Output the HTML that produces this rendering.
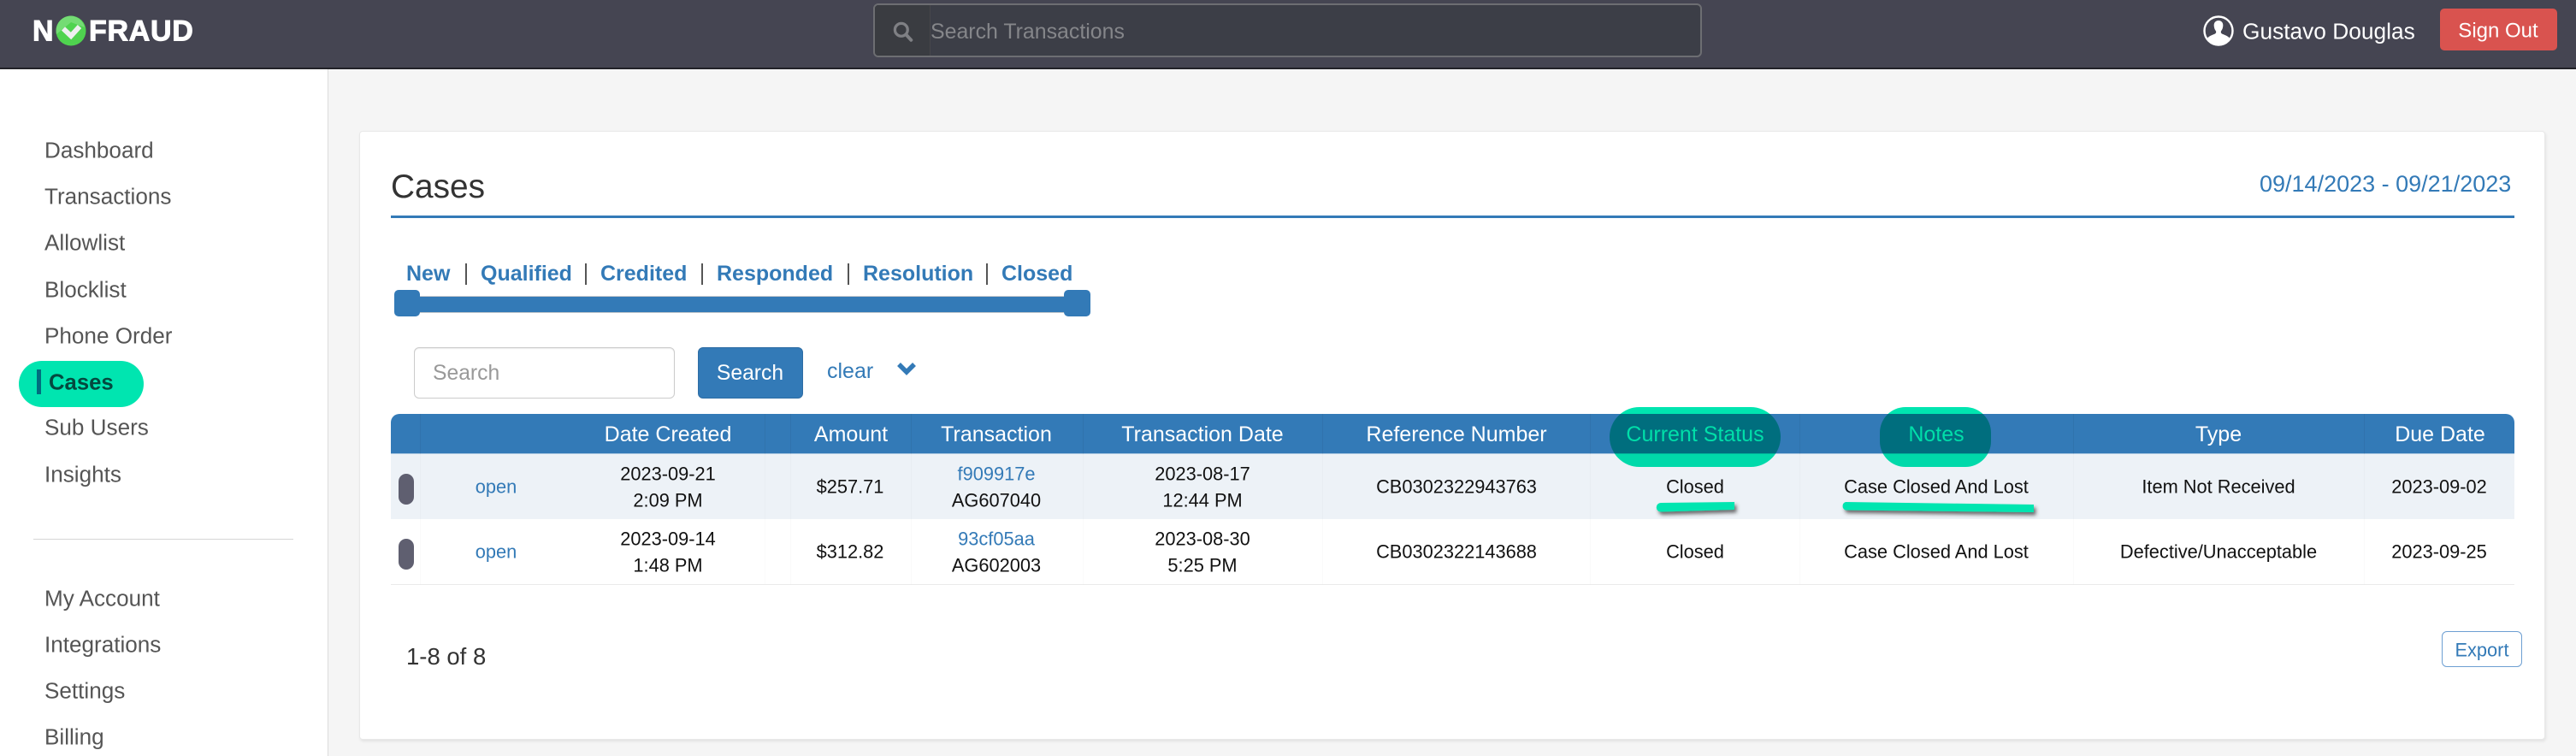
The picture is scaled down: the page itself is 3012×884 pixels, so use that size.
<!DOCTYPE html>
<html lang="en">
<head>
<meta charset="utf-8">
<title>NoFraud Cases</title>
<style>
html,body{margin:0;padding:0;width:3012px;height:884px;overflow:hidden;background:#f5f5f5;font-family:"Liberation Sans",sans-serif}
div,span,a,svg{position:absolute;box-sizing:border-box}
.c{transform:translate(-50%,calc(-50% + 1.5px));white-space:nowrap;line-height:1}
.l{transform:translateY(calc(-50% + 1.5px));white-space:nowrap;line-height:1}
.n{left:52px;font-size:26.1px;color:#555}
.th{top:507px;font-size:25px;color:#fff}
.td{font-size:21.8px;color:#111}
.lk{font-size:21.8px;color:#337ab7}
.f{top:319px;font-size:25px;font-weight:bold;color:#337ab7}
.sep{top:308px;width:2px;height:25px;background:#555}
.vh{top:484px;width:1px;height:47px;background:rgba(0,0,0,.05)}
.vb{top:531px;width:1px;height:152px;background:rgba(0,0,0,.018)}
.dot{left:466px;width:18px;height:36px;border-radius:9px;background:#5f5f70}
.pill{background:#00e5b0;mix-blend-mode:multiply}
</style>
</head>
<body>
<!-- header -->
<div style="left:0;top:0;width:3012px;height:81px;background:#454552;border-bottom:2px solid #222228"></div>
<span class="l" style="left:38px;top:35px;font-size:34px;font-weight:bold;color:#fff;-webkit-text-stroke:1px #fff">N</span>
<svg style="left:65px;top:18px" width="36" height="36" viewBox="0 0 36 36">
<circle cx="18" cy="18" r="17.5" fill="#4fd34f"/>
<path d="M18 .5A17.5 17.5 0 0 0 1 22L18 8l16 6A17.5 17.5 0 0 0 18 .5z" fill="#74dc74"/>
<path d="M9 15.5l9 8.5 10-11" fill="none" stroke="#eef0f0" stroke-width="6"/>
</svg>
<span class="l" style="left:104px;top:35px;font-size:34px;font-weight:bold;color:#fff;letter-spacing:.7px;-webkit-text-stroke:1px #fff">FRAUD</span>

<div style="left:1021px;top:4px;width:969px;height:63px;background:#3c3e47;border:2px solid #6d6e72;border-radius:6px;overflow:hidden">
<div style="left:0;top:0;width:65px;height:59px;background:#3a3c41;border-right:1px solid #46474b"></div>
</div>
<svg style="left:1044px;top:25px" width="24" height="24" viewBox="0 0 22 22"><circle cx="9" cy="9" r="6.800" fill="none" stroke="#7f8084" stroke-width="3"/><path d="M14 14l5.500 6" stroke="#7f8084" stroke-width="3.600" stroke-linecap="round"/></svg>
<span class="l" style="left:1088px;top:36px;font-size:24.9px;color:#85868a">Search Transactions</span>

<svg style="left:2576px;top:18px" width="36" height="36" viewBox="0 0 36 36">
<circle cx="18" cy="18" r="16.5" fill="#454552" stroke="#fff" stroke-width="2.4"/>
<path d="M18 6c3.6 0 5.6 2.8 5.3 6.3-.2 2.500-1 4.700-2.300 6.100-.5 1.700 0 2.700 1.900 3.500 3.200 1.300 6.400 2.500 8 4.700A16.500 16.500 0 0 1 18 34.500 16.500 16.500 0 0 1 5.100 26.600c1.600-2.200 4.800-3.400 8-4.700 1.900-.8 2.400-1.800 1.900-3.500-1.300-1.400-2.100-3.600-2.300-6.100C12.400 8.800 14.400 6 18 6z" fill="#fff"/>
</svg>
<span class="l" style="left:2622px;top:35px;font-size:26.3px;color:#fff">Gustavo Douglas</span>
<div style="left:2853px;top:10px;width:137px;height:49px;background:#d9534f;border-radius:5px"></div>
<span class="c" style="left:2921px;top:35px;font-size:24px;color:#fff">Sign Out</span>

<!-- sidebar -->
<div style="left:0;top:81px;width:384px;height:803px;background:#fff;border-right:1px solid #dcdcdc"></div>
<span class="l n" style="top:174px">Dashboard</span>
<span class="l n" style="top:228px">Transactions</span>
<span class="l n" style="top:282px">Allowlist</span>
<span class="l n" style="top:337px">Blocklist</span>
<span class="l n" style="top:391px">Phone Order</span>
<div style="left:22px;top:422px;width:146px;height:54px;border-radius:27px;background:#00e5b0"></div>
<div style="left:43px;top:432px;width:5px;height:29px;background:#006d7e"></div>
<span class="l" style="left:57px;top:447px;font-size:25.7px;font-weight:bold;color:#04493f">Cases</span>
<span class="l n" style="top:498px">Sub Users</span>
<span class="l n" style="top:553px">Insights</span>
<div style="left:39px;top:630px;width:304px;height:1px;background:#d5d5d5"></div>
<span class="l n" style="top:698px">My Account</span>
<span class="l n" style="top:752px">Integrations</span>
<span class="l n" style="top:806px">Settings</span>
<span class="l n" style="top:860px">Billing</span>

<!-- card -->
<div style="left:420px;top:153px;width:2556px;height:712px;background:#fff;border:1px solid #e8e8e8;border-radius:4px;box-shadow:1px 2px 3px rgba(0,0,0,.08)"></div>
<span class="l" style="left:457px;top:218px;font-size:38.8px;color:#333">Cases</span>
<span class="l" style="left:2642px;top:214px;font-size:27px;color:#337ab7">09/14/2023 - 09/21/2023</span>
<div style="left:457px;top:252px;width:2483px;height:3px;background:#337ab7"></div>

<!-- filter -->
<span class="l f" style="left:475px">New</span>
<div class="sep" style="left:544px"></div>
<span class="l f" style="left:562px">Qualified</span>
<div class="sep" style="left:684px"></div>
<span class="l f" style="left:702px">Credited</span>
<div class="sep" style="left:820px"></div>
<span class="l f" style="left:838px">Responded</span>
<div class="sep" style="left:991px"></div>
<span class="l f" style="left:1009px">Resolution</span>
<div class="sep" style="left:1153px"></div>
<span class="l f" style="left:1171px">Closed</span>
<div style="left:489px;top:346px;width:756px;height:20px;background:#337ab7;border-top:1px solid #c4c8cc;border-bottom:1px solid #c4c8cc"></div>
<div style="left:461px;top:339px;width:30px;height:31px;background:#337ab7;border-radius:5px"></div>
<div style="left:1244px;top:339px;width:31px;height:31px;background:#337ab7;border-radius:5px"></div>

<!-- search row -->
<div style="left:484px;top:406px;width:305px;height:60px;background:#fff;border:1px solid #ccc;border-radius:6px;box-shadow:inset 0 1px 1px rgba(0,0,0,.08)"></div>
<span class="l" style="left:506px;top:436px;font-size:24.7px;color:#999">Search</span>
<div style="left:816px;top:406px;width:123px;height:60px;background:#337ab7;border:1px solid #2e6da4;border-radius:6px"></div>
<span class="c" style="left:877px;top:436px;font-size:24.7px;color:#fff">Search</span>
<span class="l" style="left:967px;top:433px;font-size:25px;color:#337ab7">clear</span>
<svg style="left:1048px;top:423px" width="24" height="16" viewBox="0 0 24 16"><path d="M3 3l9 9 9-9" fill="none" stroke="#337ab7" stroke-width="5.500"/></svg>

<!-- table -->
<div style="left:457px;top:484px;width:2483px;height:47px;background:#337ab7;border-radius:10px 10px 0 0;border-bottom:1px solid #a9c6e0"></div>
<div style="left:457px;top:531px;width:2483px;height:76px;background:#edf2f7"></div>
<div style="left:457px;top:607px;width:2483px;height:77px;background:#fff;border-bottom:1px solid #eaeaea"></div>
<div class="vh" style="left:491px"></div><div class="vh" style="left:894px"></div><div class="vh" style="left:924px"></div><div class="vh" style="left:1065px"></div><div class="vh" style="left:1266px"></div><div class="vh" style="left:1546px"></div><div class="vh" style="left:1859px"></div><div class="vh" style="left:2104px"></div><div class="vh" style="left:2424px"></div><div class="vh" style="left:2764px"></div>
<div class="vb" style="left:491px"></div><div class="vb" style="left:894px"></div><div class="vb" style="left:924px"></div><div class="vb" style="left:1065px"></div><div class="vb" style="left:1266px"></div><div class="vb" style="left:1546px"></div><div class="vb" style="left:1859px"></div><div class="vb" style="left:2104px"></div><div class="vb" style="left:2424px"></div><div class="vb" style="left:2764px"></div>

<span class="c th" style="left:781px">Date Created</span>
<span class="c th" style="left:995px">Amount</span>
<span class="c th" style="left:1165px">Transaction</span>
<span class="c th" style="left:1406px">Transaction Date</span>
<span class="c th" style="left:1703px">Reference Number</span>
<span class="c th" style="left:2594px">Type</span>
<span class="c th" style="left:2853px">Due Date</span>

<div class="pill" style="left:1882px;top:476px;width:200px;height:70px;border-radius:35px"></div>
<div class="pill" style="left:2198px;top:476px;width:130px;height:70px;border-radius:30px"></div>
<span class="c th" style="left:1982px;color:#00dfa9">Current Status</span>
<span class="c th" style="left:2264px;color:#00dfa9">Notes</span>

<div class="dot" style="top:554px"></div>
<div class="dot" style="top:630px"></div>
<span class="c lk" style="left:580px;top:568px">open</span>
<span class="c lk" style="left:580px;top:644px">open</span>

<span class="c td" style="left:781px;top:553px">2023-09-21</span>
<span class="c td" style="left:781px;top:584px">2:09 PM</span>
<span class="c td" style="left:994px;top:568px">$257.71</span>
<span class="c lk" style="left:1165px;top:553px">f909917e</span>
<span class="c td" style="left:1165px;top:584px">AG607040</span>
<span class="c td" style="left:1406px;top:553px">2023-08-17</span>
<span class="c td" style="left:1406px;top:584px">12:44 PM</span>
<span class="c td" style="left:1703px;top:568px">CB0302322943763</span>
<span class="c td" style="left:1982px;top:568px">Closed</span>
<span class="c td" style="left:2264px;top:568px">Case Closed And Lost</span>
<span class="c td" style="left:2594px;top:568px">Item Not Received</span>
<span class="c td" style="left:2852px;top:568px">2023-09-02</span>

<span class="c td" style="left:781px;top:629px">2023-09-14</span>
<span class="c td" style="left:781px;top:660px">1:48 PM</span>
<span class="c td" style="left:994px;top:644px">$312.82</span>
<span class="c lk" style="left:1165px;top:629px">93cf05aa</span>
<span class="c td" style="left:1165px;top:660px">AG602003</span>
<span class="c td" style="left:1406px;top:629px">2023-08-30</span>
<span class="c td" style="left:1406px;top:660px">5:25 PM</span>
<span class="c td" style="left:1703px;top:644px">CB0302322143688</span>
<span class="c td" style="left:1982px;top:644px">Closed</span>
<span class="c td" style="left:2264px;top:644px">Case Closed And Lost</span>
<span class="c td" style="left:2594px;top:644px">Defective/Unacceptable</span>
<span class="c td" style="left:2852px;top:644px">2023-09-25</span>

<!-- highlighter strokes -->
<svg style="left:1930px;top:580px" width="460" height="30" viewBox="0 0 460 30">
<defs><filter id="s" x="-10%" y="-50%" width="120%" height="220%"><feDropShadow dx="2.500" dy="3.500" stdDeviation="2" flood-color="#333" flood-opacity=".7"/></filter></defs>
<path d="M12 8L98 7V16L12 18.500A5 5 0 0 1 12 8z" fill="#00e5b0" filter="url(#s)"/>
<path d="M228 7L448 10V19L228 16.500A5 5 0 0 1 228 7z" fill="#00e5b0" filter="url(#s)"/>
</svg>

<span class="l" style="left:475px;top:766px;font-size:27.500px;color:#333">1-8 of 8</span>
<div style="left:2855px;top:738px;width:94px;height:42px;background:#fff;border:1px solid #6d9fd2;border-radius:6px"></div>
<span class="c" style="left:2902px;top:759px;font-size:21.800px;color:#337ab7">Export</span>
</body>
</html>
